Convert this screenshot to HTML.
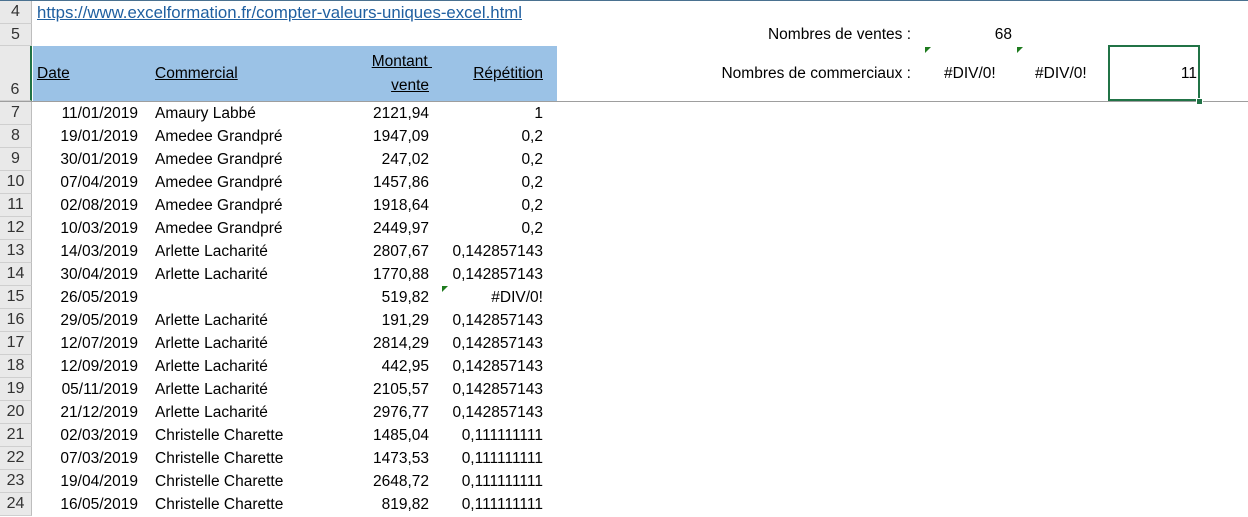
<!DOCTYPE html>
<html><head><meta charset="utf-8"><style>
body{margin:0;width:1248px;height:517px;overflow:hidden;background:#fff;font-family:"Liberation Sans",Arial,sans-serif;font-size:15.5px;color:#000;position:relative}
.a{position:absolute;white-space:nowrap;line-height:18px}
.r{text-align:right}
.rh{position:absolute;left:0;width:32px;background:#e9e9e9;border-right:1px solid #bdbdbd;border-bottom:1px solid #cfcfcf;box-sizing:border-box;text-align:center;color:#333;font-size:16px}
.tri{position:absolute;width:0;height:0;border-top:6px solid #1e7b1e;border-right:6px solid transparent}
u{text-decoration:underline}
</style></head><body>
<div style="position:absolute;left:0;top:0;width:1248px;height:1px;background:#4a7190"></div>
<div style="position:absolute;left:33px;top:46px;width:524px;height:55px;background:#9bc2e6"></div>
<div style="position:absolute;left:0;top:101px;width:1248px;height:1px;background:#9e9e9e"></div>
<div class="rh" style="top:1px;height:23px;line-height:22px">4</div>
<div class="rh" style="top:24px;height:22px;line-height:21px">5</div>
<div class="rh" style="top:46px;height:55px;line-height:88px;border-right:2px solid #217346">6</div>
<div class="a" style="left:37px;top:4px;color:#1f5fa0;font-size:16.8px"><u>https://www.excelformation.fr/compter-valeurs-uniques-excel.html</u></div>
<div class="a" style="left:37px;top:65px"><u>Date</u></div>
<div class="a" style="left:155px;top:65px"><u>Commercial</u></div>
<div class="a r" style="left:330px;width:102px;top:53px"><u>Montant&nbsp;</u></div>
<div class="a r" style="left:330px;width:99px;top:77px"><u>vente</u></div>
<div class="a r" style="left:440px;width:103px;top:65px"><u>Répétition</u></div>
<div class="a r" style="left:700px;width:211px;top:26px">Nombres de ventes :</div>
<div class="a r" style="left:960px;width:52px;top:26px">68</div>
<div class="a r" style="left:700px;width:211px;top:65px">Nombres de commerciaux :</div>
<div class="a" style="left:944px;top:65px">#DIV/0!</div>
<div class="a" style="left:1035px;top:65px">#DIV/0!</div>
<div class="a r" style="left:1120px;width:77px;top:65px">11</div>
<div class="tri" style="left:925px;top:47px"></div>
<div class="tri" style="left:1017px;top:47px"></div>
<div style="position:absolute;left:1108px;top:45px;width:92px;height:56px;border:2px solid #217346;box-sizing:border-box"></div>
<div style="position:absolute;left:1196px;top:98px;width:5px;height:5px;background:#217346;border:1px solid #fff"></div>
<div class="tri" style="left:442px;top:286px"></div>
<div id="rows"></div>
<script>
var d=[["11/01/2019","Amaury Labbé","2121,94","1"],["19/01/2019","Amedee Grandpré","1947,09","0,2"],["30/01/2019","Amedee Grandpré","247,02","0,2"],["07/04/2019","Amedee Grandpré","1457,86","0,2"],["02/08/2019","Amedee Grandpré","1918,64","0,2"],["10/03/2019","Amedee Grandpré","2449,97","0,2"],["14/03/2019","Arlette Lacharité","2807,67","0,142857143"],["30/04/2019","Arlette Lacharité","1770,88","0,142857143"],["26/05/2019","","519,82","#DIV/0!"],["29/05/2019","Arlette Lacharité","191,29","0,142857143"],["12/07/2019","Arlette Lacharité","2814,29","0,142857143"],["12/09/2019","Arlette Lacharité","442,95","0,142857143"],["05/11/2019","Arlette Lacharité","2105,57","0,142857143"],["21/12/2019","Arlette Lacharité","2976,77","0,142857143"],["02/03/2019","Christelle Charette","1485,04","0,111111111"],["07/03/2019","Christelle Charette","1473,53","0,111111111"],["19/04/2019","Christelle Charette","2648,72","0,111111111"],["16/05/2019","Christelle Charette","819,82","0,111111111"]];
var h="";
for(var i=0;i<d.length;i++){var t=102+i*23;
h+='<div class="rh" style="top:'+t+'px;height:23px;line-height:22px">'+(7+i)+'</div>';
h+='<div class="a r" style="left:33px;width:105px;top:'+(t+3)+'px">'+d[i][0]+'</div>';
h+='<div class="a" style="left:155px;top:'+(t+3)+'px">'+d[i][1]+'</div>';
h+='<div class="a r" style="left:330px;width:99px;top:'+(t+3)+'px">'+d[i][2]+'</div>';
h+='<div class="a r" style="left:440px;width:103px;top:'+(t+3)+'px">'+d[i][3]+'</div>';}
document.getElementById("rows").innerHTML=h;
</script>
</body></html>
